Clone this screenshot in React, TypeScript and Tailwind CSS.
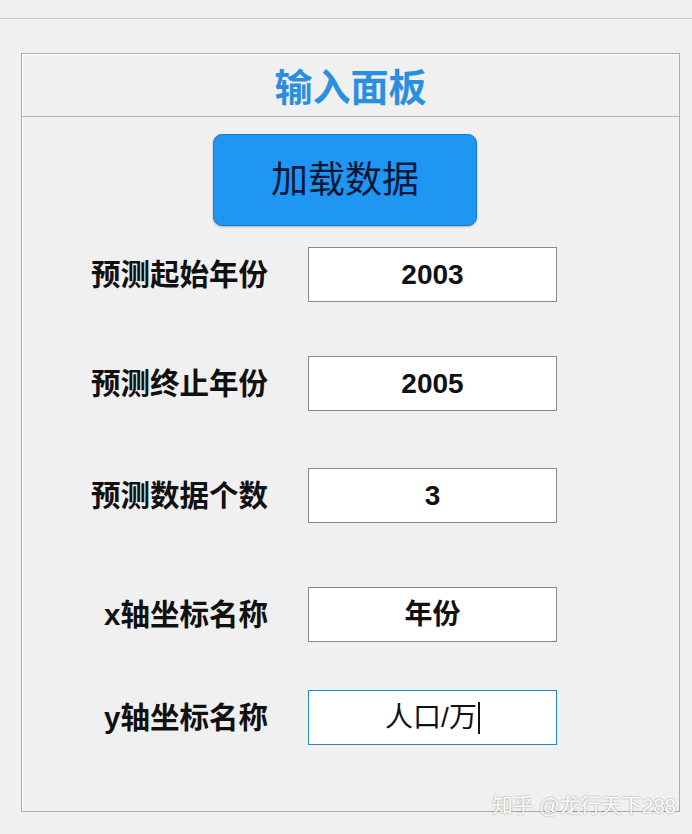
const fields = [
  { label: "预测起始年份", value: "2003", bold: true, mt: "mt-[21px]" },
  { label: "预测终止年份", value: "2005", bold: true, mt: "mt-[54px]" },
  { label: "预测数据个数", value: "3", bold: true, mt: "mt-[57px]" },
  { label: "x轴坐标名称", value: "年份", bold: true, mt: "mt-[64px]" },
  { label: "y轴坐标名称", value: "人口/万", bold: false, mt: "mt-[48px]", focused: true },
];

const font = "font-['Liberation_Sans','Noto_Sans_CJK_SC',sans-serif]";

export default function App() {
  return (
    <div className={`relative w-[692px] h-[834px] overflow-hidden bg-[#f0f0f0] ${font}`}>
      <div className="h-[19px] border-b border-[#c9c9c9]" />

      {/* 输入面板 */}
      <div className="ml-[21px] mr-[12px] mt-[34px] h-[759px] border border-[#acacac] shadow-[inset_1px_1px_0_#ffffff]">
        <div className="h-[63px] pt-[6px] flex items-center justify-center border-b border-[#b4b4b4]">
          <span className="text-[38px] font-bold text-[#2a8fe0] leading-none">输入面板</span>
        </div>

        <button className="ml-[191px] mt-[17px] flex w-[264px] h-[92px] items-center justify-center rounded-[9px] bg-[#1e96f2] border border-[#1479c8] shadow-[0_1px_2px_rgba(0,0,0,0.25)] text-[37px] text-[#0a1838] leading-none">
          加载数据
        </button>

        {fields.map((f) => (
          <div key={f.label} className={`flex items-center ${f.mt}`}>
            <div className="w-[246px] text-right text-[29.5px] font-bold text-[#111111] leading-none">{f.label}</div>
            <div
              className={`ml-[40px] flex w-[249px] h-[55px] items-center justify-center bg-white border ${
                f.focused ? "border-[#1c8ad4]" : "border-[#8a8a8a]"
              }`}
            >
              <span className={`text-[28px] text-[#111111] leading-none ${f.bold ? "font-bold" : "font-normal"}`}>
                {f.value}
              </span>
              {f.focused && <span className="ml-[1px] w-[2px] h-[32px] bg-[#111111]" />}
            </div>
          </div>
        ))}
      </div>

      <div className="absolute right-[16px] bottom-[18px] text-[20.5px] text-white leading-none [text-shadow:0_0_2px_rgba(0,0,0,0.45)]">
        知乎 @龙行天下288
      </div>
    </div>
  );
}
